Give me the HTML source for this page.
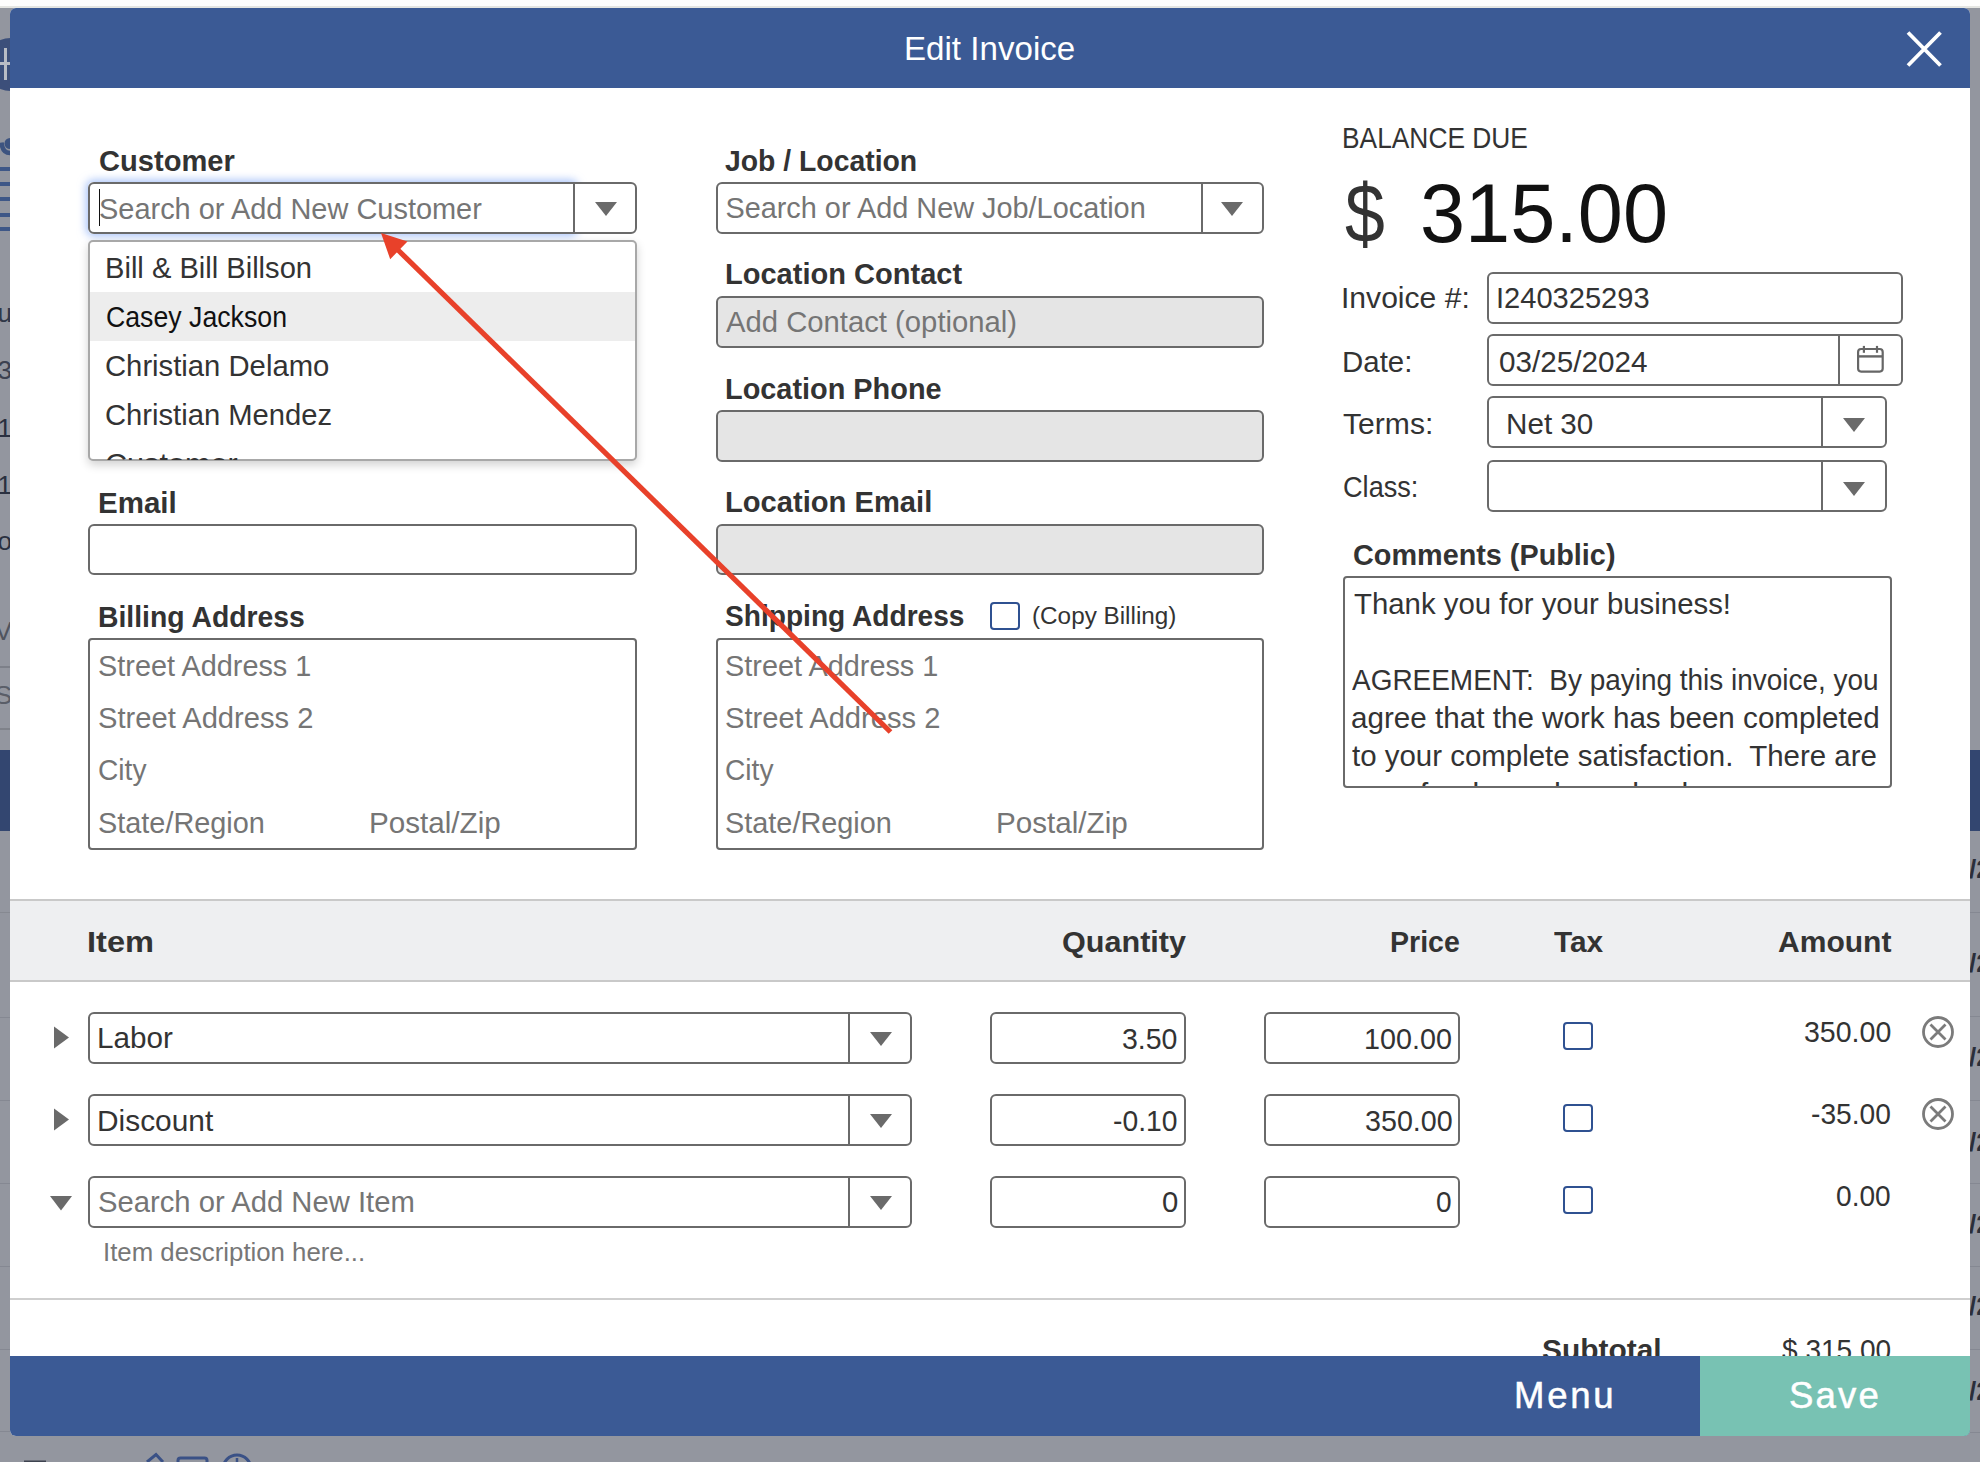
<!DOCTYPE html>
<html><head><meta charset="utf-8">
<style>
*{box-sizing:border-box}
html,body{margin:0;padding:0}
body{width:1980px;height:1462px;position:relative;overflow:hidden;background:#93969f;font-family:"Liberation Sans",sans-serif}
.a{position:absolute}
.t{position:absolute;white-space:pre;line-height:1;transform-origin:0 0;font-family:"Liberation Sans",sans-serif}
.inp{position:absolute;border:2px solid #6a6a6a;border-radius:6px;background:#fff}
.dis{background:#e5e5e5}
.sep{position:absolute;top:0;bottom:0;width:2px;background:#6a6a6a}
.tri{position:absolute;width:0;height:0;border-left:11px solid transparent;border-right:11px solid transparent;border-top:14.5px solid #6a6a6a}
.cb{position:absolute;width:30px;height:28px;border:2px solid #2f5191;border-radius:4px;background:#fff}
</style></head><body>
<!-- top strip -->
<div class="a" style="left:0;top:0;width:1980px;height:6px;background:#fdfdfd"></div>
<div class="a" style="left:0;top:6px;width:1980px;height:2px;background:#e4e5e2"></div>
<!-- background bits (left) -->
<div class="a" style="left:-16px;top:38px;width:53px;height:53px;border-radius:50%;background:#3c4f7a"></div>
<div class="a" style="left:4px;top:48px;width:3px;height:32px;background:#b9bcc4"></div>
<div class="a" style="left:0;top:62px;width:10px;height:3px;background:#b9bcc4"></div>
<svg class="a" style="left:0;top:130px" width="10" height="30" viewBox="0 0 10 30"><path d="M1.5 12.5 Q2.5 23 10 23" fill="none" stroke="#3c5380" stroke-width="4.5"/><path d="M10 8 A5 5 0 0 0 10 19 Z" fill="#3c5380"/></svg>
<div class="a" style="left:0;top:167px;width:10px;height:4px;background:#3e5787"></div>
<div class="a" style="left:0;top:182px;width:10px;height:4px;background:#3e5787"></div>
<div class="a" style="left:0;top:197px;width:10px;height:4px;background:#3e5787"></div>
<div class="a" style="left:0;top:213px;width:10px;height:4px;background:#3e5787"></div>
<div class="a" style="left:0;top:227px;width:10px;height:4px;background:#3e5787"></div>
<div class="a" style="left:0;top:728px;width:10px;height:2px;background:#7f828a"></div>
<div class="a" style="left:0;top:750px;width:10px;height:81px;background:#334670"></div>
<div class="a" style="left:0;top:912px;width:10px;height:1px;background:#868991"></div>
<div class="a" style="left:0;top:1017px;width:10px;height:1px;background:#858892"></div>
<div class="a" style="left:0;top:1100px;width:10px;height:1px;background:#858892"></div>
<div class="a" style="left:0;top:1183px;width:10px;height:1px;background:#858892"></div>
<div class="a" style="left:0;top:1266px;width:10px;height:1px;background:#858892"></div>
<div class="a" style="left:0;top:1349px;width:10px;height:1px;background:#858892"></div>
<div class="a" style="left:0;top:1431px;width:10px;height:1px;background:#858892"></div>
<!-- background bits (right) -->
<div class="a" style="left:1970px;top:750px;width:10px;height:81px;background:#334670"></div>
<div class="a" style="left:1970px;top:912px;width:10px;height:1px;background:#858892"></div>
<div class="a" style="left:1970px;top:1016px;width:10px;height:1px;background:#858892"></div>
<div class="a" style="left:1970px;top:1100px;width:10px;height:1px;background:#858892"></div>
<div class="a" style="left:1970px;top:1183px;width:10px;height:1px;background:#858892"></div>
<div class="a" style="left:1970px;top:1266px;width:10px;height:1px;background:#858892"></div>
<div class="a" style="left:1970px;top:1349px;width:10px;height:1px;background:#858892"></div>
<div class="a" style="left:1970px;top:1432px;width:10px;height:1px;background:#858892"></div>
<span class="a" style="left:1969px;top:856px;font:bold 26px/1 'Liberation Sans',sans-serif;color:#2a2e3a;white-space:pre">/2</span>
<span class="a" style="left:1969px;top:950px;font:bold 26px/1 'Liberation Sans',sans-serif;color:#2a2e3a;white-space:pre">/2</span>
<span class="a" style="left:1969px;top:1044px;font:bold 26px/1 'Liberation Sans',sans-serif;color:#2a2e3a;white-space:pre">/2</span>
<span class="a" style="left:1969px;top:1129px;font:bold 26px/1 'Liberation Sans',sans-serif;color:#2a2e3a;white-space:pre">/2</span>
<span class="a" style="left:1969px;top:1211px;font:bold 26px/1 'Liberation Sans',sans-serif;color:#2a2e3a;white-space:pre">/2</span>
<span class="a" style="left:1969px;top:1293px;font:bold 26px/1 'Liberation Sans',sans-serif;color:#2a2e3a;white-space:pre">/2</span>
<span class="a" style="left:1969px;top:1378px;font:bold 26px/1 'Liberation Sans',sans-serif;color:#2a2e3a;white-space:pre">/2</span>
<span class="a" style="right:1968px;top:300px;font:26px/1 'Liberation Sans',sans-serif;color:#303848;white-space:pre">u</span>
<span class="a" style="right:1968px;top:357px;font:26px/1 'Liberation Sans',sans-serif;color:#3c4150;white-space:pre">-3</span>
<span class="a" style="right:1968px;top:415px;font:26px/1 'Liberation Sans',sans-serif;color:#2a3040;white-space:pre">1</span>
<span class="a" style="right:1968px;top:472px;font:26px/1 'Liberation Sans',sans-serif;color:#2a3040;white-space:pre">1</span>
<span class="a" style="right:1968px;top:528px;font:26px/1 'Liberation Sans',sans-serif;color:#2a3040;white-space:pre">o</span>
<span class="a" style="right:1968px;top:618px;font:26px/1 'Liberation Sans',sans-serif;color:#50545e;white-space:pre">V</span>
<span class="a" style="right:1968px;top:682px;font:26px/1 'Liberation Sans',sans-serif;color:#5a5e68;white-space:pre">S</span>
<div class="a" style="left:0;top:666px;width:10px;height:2px;background:#7d8089"></div>
<svg class="a" style="left:0;top:1440px" width="300" height="22" viewBox="0 0 300 22">
<rect x="24" y="20.5" width="22" height="3" fill="#3e4350"/>
<path d="M147 22 L156 14.5 L163 22" fill="none" stroke="#3a5186" stroke-width="3"/>
<rect x="178" y="18" width="29" height="12" rx="2.5" fill="none" stroke="#3a5186" stroke-width="3"/>
<circle cx="237" cy="29" r="14" fill="none" stroke="#3a5186" stroke-width="3"/>
<line x1="237" y1="18" x2="237" y2="24" stroke="#3a5186" stroke-width="2.5"/>
</svg>
<!-- modal -->
<div class="a" style="left:10px;top:8px;width:1960px;height:1428px;background:#fff;border-radius:6px;overflow:hidden">
  <div class="a" style="left:0;top:0;width:1960px;height:80px;background:#3b5a95"></div>
</div>
<!-- close X -->
<svg class="a" style="left:1900px;top:25px" width="48" height="48" viewBox="0 0 48 48"><path d="M8 7.5 L40.5 40.5 M40.5 7.5 L8 40.5" stroke="#fff" stroke-width="3.8" fill="none"/></svg>

<!-- Customer input -->
<div class="a" style="left:88px;top:182px;width:488px;height:52px;border-radius:5px;box-shadow:0 0 9px 2px rgba(110,155,245,0.6)"></div>
<div class="inp" style="left:88px;top:182px;width:549px;height:52px"><div class="sep" style="left:483px"></div></div>
<div class="tri" style="left:595px;top:202px"></div>
<div class="a" style="left:98.5px;top:189px;width:1.5px;height:37px;background:#111"></div>
<!-- dropdown list -->
<div class="a" style="left:88px;top:240px;width:549px;height:221px;border:2px solid #a8a8a8;border-radius:5px;background:#fff;box-shadow:0 4px 10px rgba(0,0,0,0.18)">
  <div class="a" style="left:0;top:50px;width:545px;height:49px;background:#ededed"></div>
</div>
<!-- Email input -->
<div class="inp" style="left:88px;top:524px;width:549px;height:51px"></div>
<!-- Billing box -->
<div class="inp" style="left:88px;top:638px;width:549px;height:212px;border-radius:4px"></div>

<!-- Job input -->
<div class="inp" style="left:716px;top:182px;width:548px;height:52px"><div class="sep" style="left:483px"></div></div>
<div class="tri" style="left:1221px;top:202px"></div>
<div class="inp dis" style="left:716px;top:296px;width:548px;height:52px"></div>
<div class="inp dis" style="left:716px;top:410px;width:548px;height:52px"></div>
<div class="inp dis" style="left:716px;top:524px;width:548px;height:51px"></div>
<div class="cb" style="left:990px;top:602px"></div>
<div class="inp" style="left:716px;top:638px;width:548px;height:212px;border-radius:4px"></div>

<!-- right column -->
<div class="inp" style="left:1487px;top:272px;width:416px;height:52px"></div>
<div class="inp" style="left:1487px;top:334px;width:416px;height:52px"><div class="sep" style="left:349px"></div></div>
<svg class="a" style="left:1855px;top:345px" width="30" height="30" viewBox="0 0 30 30"><rect x="3.1" y="4" width="24.6" height="22.6" rx="3" fill="none" stroke="#666" stroke-width="2.2"/><line x1="3" y1="11.4" x2="27.7" y2="11.4" stroke="#666" stroke-width="2.4"/><line x1="8.9" y1="0.9" x2="8.9" y2="7.8" stroke="#666" stroke-width="2.2"/><line x1="22" y1="0.9" x2="22" y2="7.8" stroke="#666" stroke-width="2.2"/></svg>
<div class="inp" style="left:1487px;top:396px;width:400px;height:52px"><div class="sep" style="left:332px"></div></div>
<div class="tri" style="left:1843px;top:418px"></div>
<div class="inp" style="left:1487px;top:460px;width:400px;height:52px"><div class="sep" style="left:332px"></div></div>
<div class="tri" style="left:1843px;top:482px"></div>
<div class="inp" style="left:1343px;top:576px;width:549px;height:212px;border-radius:4px"></div>

<!-- table header -->
<div class="a" style="left:10px;top:899px;width:1960px;height:83px;background:#eeeff1;border-top:2px solid #c9c9c9;border-bottom:2px solid #c9c9c9"></div>

<!-- rows -->
<div class="inp" style="left:88px;top:1012px;width:824px;height:52px"><div class="sep" style="left:758px"></div></div>
<div class="tri" style="left:870px;top:1032px"></div>
<div class="inp" style="left:990px;top:1012px;width:196px;height:52px"></div>
<div class="inp" style="left:1264px;top:1012px;width:196px;height:52px"></div>
<div class="cb" style="left:1563px;top:1022px"></div>

<div class="inp" style="left:88px;top:1094px;width:824px;height:52px"><div class="sep" style="left:758px"></div></div>
<div class="tri" style="left:870px;top:1114px"></div>
<div class="inp" style="left:990px;top:1094px;width:196px;height:52px"></div>
<div class="inp" style="left:1264px;top:1094px;width:196px;height:52px"></div>
<div class="cb" style="left:1563px;top:1104px"></div>

<div class="inp" style="left:88px;top:1176px;width:824px;height:52px"><div class="sep" style="left:758px"></div></div>
<div class="tri" style="left:870px;top:1196px"></div>
<div class="inp" style="left:990px;top:1176px;width:196px;height:52px"></div>
<div class="inp" style="left:1264px;top:1176px;width:196px;height:52px"></div>
<div class="cb" style="left:1563px;top:1186px"></div>

<!-- expand triangles -->
<svg class="a" style="left:50px;top:1020px" width="24" height="200" viewBox="0 0 24 200">
  <path d="M4 6.5 L19 17.5 L4 28.5 Z" fill="#6a6a6a"/>
  <path d="M4 88.5 L19 99.5 L4 110.5 Z" fill="#6a6a6a"/>
  <path d="M0 176 L22 176 L11 190.5 Z" fill="#6a6a6a"/>
</svg>
<!-- remove icons -->
<svg class="a" style="left:1920px;top:1014px" width="36" height="120" viewBox="0 0 36 120">
  <g fill="none" stroke="#7b7b7b" stroke-width="2.8">
    <circle cx="18" cy="18" r="14.5"/><path d="M10.5 10.5 L25.5 25.5 M25.5 10.5 L10.5 25.5"/>
    <circle cx="18" cy="100" r="14.5"/><path d="M10.5 92.5 L25.5 107.5 M25.5 92.5 L10.5 107.5"/>
  </g>
</svg>
<!-- bottom line -->
<div class="a" style="left:10px;top:1298px;width:1960px;height:2px;background:#cfcfcf"></div>

<!-- footer -->
<div class="a" style="left:10px;top:1356px;width:1960px;height:80px;background:#3b5a95;border-radius:0 0 6px 6px;z-index:3;overflow:hidden">
  <div class="a" style="left:1690px;top:0;width:270px;height:80px;background:#78c2b3"></div>
</div>

<span class="t" style="left:903.71px;top:32.00px;font-size:33.29px;font-weight:400;color:#fff;transform:scaleX(0.9952);">Edit Invoice</span>
<span class="t" style="left:98.71px;top:146.00px;font-size:29.29px;font-weight:700;color:#333;transform:scaleX(0.9933);">Customer</span>
<span class="t" style="left:98.70px;top:195.00px;font-size:28.86px;font-weight:400;color:#757575;transform:scaleX(1.0029);">Search or Add New Customer</span>
<span class="t" style="left:104.98px;top:254.00px;font-size:28.86px;font-weight:400;color:#333;transform:scaleX(1.0084);">Bill &amp; Bill Billson</span>
<span class="t" style="left:105.58px;top:303.00px;font-size:28.86px;font-weight:400;color:#111;transform:scaleX(0.9249);">Casey Jackson</span>
<span class="t" style="left:105.49px;top:352.00px;font-size:28.86px;font-weight:400;color:#333;transform:scaleX(1.0132);">Christian Delamo</span>
<span class="t" style="left:105.49px;top:401.00px;font-size:28.86px;font-weight:400;color:#333;transform:scaleX(1.0113);">Christian Mendez</span>
<div style="position:absolute;left:0;top:0;width:1980px;height:460px;overflow:hidden;z-index:2"><span class="t" style="left:105.44px;top:450.00px;font-size:28.86px;font-weight:400;color:#333;transform:scaleX(1.0600);">Customer</span></div>
<span class="t" style="left:97.68px;top:488.00px;font-size:29.29px;font-weight:700;color:#333;transform:scaleX(1.0081);">Email</span>
<span class="t" style="left:97.76px;top:602.00px;font-size:29.29px;font-weight:700;color:#333;transform:scaleX(0.9682);">Billing Address</span>
<span class="t" style="left:98.00px;top:652.00px;font-size:28.86px;font-weight:400;color:#757575;">Street Address 1</span>
<span class="t" style="left:97.99px;top:704.00px;font-size:28.86px;font-weight:400;color:#757575;transform:scaleX(1.0095);">Street Address 2</span>
<span class="t" style="left:98.02px;top:756.00px;font-size:28.86px;font-weight:400;color:#757575;transform:scaleX(0.9755);">City</span>
<span class="t" style="left:98.00px;top:809.00px;font-size:28.86px;font-weight:400;color:#757575;">State/Region</span>
<span class="t" style="left:369.35px;top:809.00px;font-size:28.86px;font-weight:400;color:#757575;transform:scaleX(1.0264);">Postal/Zip</span>
<span class="t" style="left:725.00px;top:652.00px;font-size:28.86px;font-weight:400;color:#757575;">Street Address 1</span>
<span class="t" style="left:724.99px;top:704.00px;font-size:28.86px;font-weight:400;color:#757575;transform:scaleX(1.0095);">Street Address 2</span>
<span class="t" style="left:725.02px;top:756.00px;font-size:28.86px;font-weight:400;color:#757575;transform:scaleX(0.9755);">City</span>
<span class="t" style="left:725.00px;top:809.00px;font-size:28.86px;font-weight:400;color:#757575;">State/Region</span>
<span class="t" style="left:996.35px;top:809.00px;font-size:28.86px;font-weight:400;color:#757575;transform:scaleX(1.0264);">Postal/Zip</span>
<span class="t" style="left:724.53px;top:146.00px;font-size:29.29px;font-weight:700;color:#333;transform:scaleX(0.9684);">Job / Location</span>
<span class="t" style="left:725.40px;top:194.00px;font-size:28.86px;font-weight:400;color:#757575;">Search or Add New Job/Location</span>
<span class="t" style="left:725.02px;top:259.00px;font-size:29.29px;font-weight:700;color:#333;transform:scaleX(0.9916);">Location Contact</span>
<span class="t" style="left:726.40px;top:308.00px;font-size:28.86px;font-weight:400;color:#757575;transform:scaleX(1.0136);">Add Contact (optional)</span>
<span class="t" style="left:725.03px;top:374.00px;font-size:29.29px;font-weight:700;color:#333;transform:scaleX(0.9862);">Location Phone</span>
<span class="t" style="left:725.01px;top:487.00px;font-size:29.29px;font-weight:700;color:#333;transform:scaleX(0.9951);">Location Email</span>
<span class="t" style="left:725.44px;top:601.00px;font-size:29.29px;font-weight:700;color:#333;transform:scaleX(0.9601);">Shipping Address</span>
<span class="t" style="left:1032.00px;top:604.00px;font-size:24.29px;font-weight:400;color:#333;">(Copy Billing)</span>
<span class="t" style="left:1342.19px;top:124.00px;font-size:29.14px;font-weight:400;color:#333;transform:scaleX(0.9044);">BALANCE DUE</span>
<span class="t" style="left:1344.95px;top:171.00px;font-size:84.29px;font-weight:400;color:#333;transform:scaleX(0.8489);">$</span>
<span class="t" style="left:1420.11px;top:171.00px;font-size:84.29px;font-weight:400;color:#111;transform:scaleX(0.9623);">315.00</span>
<span class="t" style="left:1340.87px;top:284.00px;font-size:28.86px;font-weight:400;color:#333;transform:scaleX(1.0424);">Invoice #:</span>
<span class="t" style="left:1495.78px;top:284.00px;font-size:28.86px;font-weight:400;color:#333;transform:scaleX(1.0074);">I240325293</span>
<span class="t" style="left:1341.96px;top:348.00px;font-size:28.86px;font-weight:400;color:#333;transform:scaleX(1.0200);">Date:</span>
<span class="t" style="left:1499.27px;top:348.00px;font-size:28.86px;font-weight:400;color:#333;transform:scaleX(1.0280);">03/25/2024</span>
<span class="t" style="left:1342.96px;top:410.00px;font-size:28.86px;font-weight:400;color:#333;transform:scaleX(1.0434);">Terms:</span>
<span class="t" style="left:1506.45px;top:410.00px;font-size:28.86px;font-weight:400;color:#333;transform:scaleX(1.0268);">Net 30</span>
<span class="t" style="left:1343.06px;top:473.00px;font-size:28.86px;font-weight:400;color:#333;transform:scaleX(0.9403);">Class:</span>
<span class="t" style="left:1353.02px;top:540.00px;font-size:29.29px;font-weight:700;color:#333;transform:scaleX(0.9838);">Comments (Public)</span>
<span class="t" style="left:1353.98px;top:590.00px;font-size:28.86px;font-weight:400;color:#333;transform:scaleX(1.0174);">Thank you for your business!</span>
<span class="t" style="left:1352.00px;top:666.00px;font-size:28.86px;font-weight:400;color:#333;transform:scaleX(0.9686);">AGREEMENT:  By paying this invoice, you</span>
<span class="t" style="left:1350.97px;top:704.00px;font-size:28.86px;font-weight:400;color:#333;transform:scaleX(1.0268);">agree that the work has been completed</span>
<span class="t" style="left:1352.00px;top:742.00px;font-size:28.86px;font-weight:400;color:#333;transform:scaleX(1.0203);">to your complete satisfaction.  There are</span>
<div style="position:absolute;left:0;top:0;width:1980px;height:786px;overflow:hidden;z-index:2"><span class="t" style="left:1349.88px;top:780.00px;font-size:28.86px;font-weight:400;color:#333;transform:scaleX(1.0600);">no refunds or chargebacks</span></div>
<span class="t" style="left:87.08px;top:927.00px;font-size:29.29px;font-weight:700;color:#333;transform:scaleX(1.1123);">Item</span>
<span class="t" style="left:1061.56px;top:927.00px;font-size:29.29px;font-weight:700;color:#333;transform:scaleX(1.0441);">Quantity</span>
<span class="t" style="left:1390.05px;top:927.00px;font-size:29.29px;font-weight:700;color:#333;transform:scaleX(0.9754);">Price</span>
<span class="t" style="left:1554.10px;top:927.00px;font-size:29.29px;font-weight:700;color:#333;transform:scaleX(1.0188);">Tax</span>
<span class="t" style="left:1777.87px;top:927.00px;font-size:29.29px;font-weight:700;color:#333;transform:scaleX(1.0257);">Amount</span>
<span class="t" style="left:97.24px;top:1024.00px;font-size:28.86px;font-weight:400;color:#333;transform:scaleX(1.0278);">Labor</span>
<span class="t" style="left:97.23px;top:1107.00px;font-size:28.86px;font-weight:400;color:#333;transform:scaleX(1.0355);">Discount</span>
<span class="t" style="left:98.29px;top:1188.00px;font-size:28.86px;font-weight:400;color:#757575;transform:scaleX(1.0129);">Search or Add New Item</span>
<span class="t" style="left:1122.21px;top:1025.00px;font-size:28.86px;font-weight:400;color:#333;transform:scaleX(0.9870);">3.50</span>
<span class="t" style="left:1364.41px;top:1025.00px;font-size:28.86px;font-weight:400;color:#333;transform:scaleX(0.9953);">100.00</span>
<span class="t" style="left:1112.82px;top:1107.00px;font-size:28.86px;font-weight:400;color:#333;transform:scaleX(0.9797);">-0.10</span>
<span class="t" style="left:1364.61px;top:1107.00px;font-size:28.86px;font-weight:400;color:#333;transform:scaleX(0.9930);">350.00</span>
<span class="t" style="left:1161.59px;top:1188.00px;font-size:28.86px;font-weight:400;color:#333;transform:scaleX(1.0143);">0</span>
<span class="t" style="left:1436.43px;top:1188.00px;font-size:28.86px;font-weight:400;color:#333;transform:scaleX(0.9714);">0</span>
<span class="t" style="left:1804.01px;top:1018.00px;font-size:28.86px;font-weight:400;color:#333;transform:scaleX(0.9884);">350.00</span>
<span class="t" style="left:1810.92px;top:1100.00px;font-size:28.86px;font-weight:400;color:#333;transform:scaleX(0.9762);">-35.00</span>
<span class="t" style="left:1836.43px;top:1182.00px;font-size:28.86px;font-weight:400;color:#333;transform:scaleX(0.9741);">0.00</span>
<span class="t" style="left:102.75px;top:1240.00px;font-size:25.14px;font-weight:400;color:#777;transform:scaleX(1.0259);">Item description here...</span>
<span class="t" style="left:1541.98px;top:1335.00px;font-size:29.29px;font-weight:700;color:#333;transform:scaleX(1.0219);">Subtotal</span>
<span class="t" style="left:1782.40px;top:1336.00px;font-size:28.86px;font-weight:400;color:#333;transform:scaleX(0.9721);">$ 315.00</span>
<span class="t" style="left:1514.00px;top:1378.00px;font-size:36.57px;font-weight:400;color:#fff;z-index:5;letter-spacing:2.67px;-webkit-text-stroke:0.5px #fff;">Menu</span>
<span class="t" style="left:1789.00px;top:1378.00px;font-size:36.57px;font-weight:400;color:#fff;z-index:5;letter-spacing:2.17px;-webkit-text-stroke:0.5px #fff;">Save</span>

<!-- red arrow -->
<svg class="a" style="left:0;top:0;z-index:10" width="1980" height="1462" viewBox="0 0 1980 1462">
  <line x1="890.5" y1="732" x2="398" y2="250" stroke="#e8412a" stroke-width="5.2"/>
  <path d="M381 233 L407.5 241.5 L390.2 259.2 Z" fill="#e8412a"/>
</svg>
</body></html>
